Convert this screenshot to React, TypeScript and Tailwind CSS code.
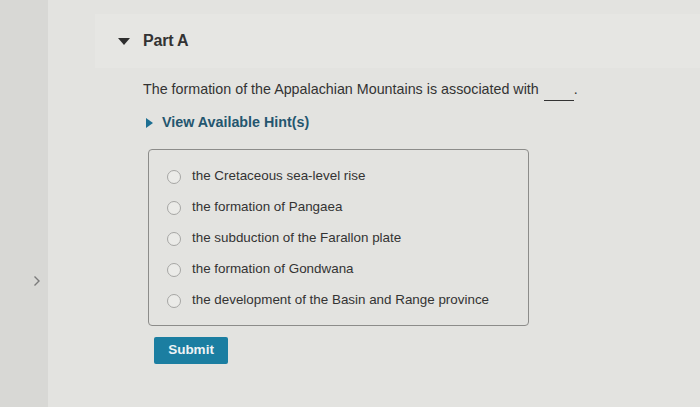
import React from 'react'

const options = [
  'the Cretaceous sea-level rise',
  'the formation of Pangaea',
  'the subduction of the Farallon plate',
  'the formation of Gondwana',
  'the development of the Basin and Range province',
]

export default function App() {
  return (
    <div
      className="flex w-[700px] h-[407px] overflow-hidden bg-[#e3e3e0] text-[#333333]"
      style={{ fontFamily: '"Liberation Sans", Arial, sans-serif' }}
    >
      {/* side rail */}
      <div className="w-[48px] shrink-0 bg-[#d8d8d5] pt-[275px] pl-[33px]">
        <svg width="8" height="12" viewBox="0 0 8 12" fill="none" stroke="#7a7a7a" strokeWidth="1.4">
          <path d="M1.5 1.5 L6 6 L1.5 10.5" />
        </svg>
      </div>

      <div className="flex-1 flex flex-col">
        {/* part header */}
        <div className="mt-[14px] ml-[47px] h-[54px] bg-[#e6e6e3] flex items-center pl-[23px]">
          <svg width="12" height="7" viewBox="0 0 12 7">
            <path d="M0 0 L12 0 L6 7 Z" fill="#2e2e2e" />
          </svg>
          <span className="ml-[13px] text-[16px] font-bold tracking-[-0.2px] text-[#333]">Part A</span>
        </div>

        <div className="ml-[95px] mt-[13px] text-[14.3px] leading-[17px] flex items-end">
          <span>The formation of the Appalachian Mountains is associated with</span>
          <span className="ml-[5px] inline-block w-[30px] border-b border-[#333] mb-[-3px]" />
          <span>.</span>
        </div>

        <div className="ml-[98px] mt-[16px] flex items-center text-[14.3px] leading-[17px] font-bold text-[#24566f]">
          <svg width="7" height="10" viewBox="0 0 7 10">
            <path d="M0 0 L7 5 L0 10 Z" fill="#1d6f92" />
          </svg>
          <span className="ml-[9px]">View Available Hint(s)</span>
        </div>

        {/* answer options */}
        <div className="ml-[100px] mt-[18px] w-[381px] h-[177px] border border-[#8c8c8a] rounded-[4px] pt-[11px] pl-[18px] flex flex-col">
          {options.map((o) => (
            <label key={o} className="h-[31px] flex items-center text-[13.4px]">
              <span className="w-[14px] h-[14px] rounded-full border border-[#a6a6a4] bg-[#ebebe8] shrink-0" />
              <span className="ml-[11px]">{o}</span>
            </label>
          ))}
        </div>

        <div className="ml-[106px] mt-[11px]">
          <button className="w-[74px] h-[27px] bg-[#1b7ea1] rounded-[2px] text-[13.5px] font-bold text-[#eef3f5]">
            Submit
          </button>
        </div>
      </div>
    </div>
  )
}
